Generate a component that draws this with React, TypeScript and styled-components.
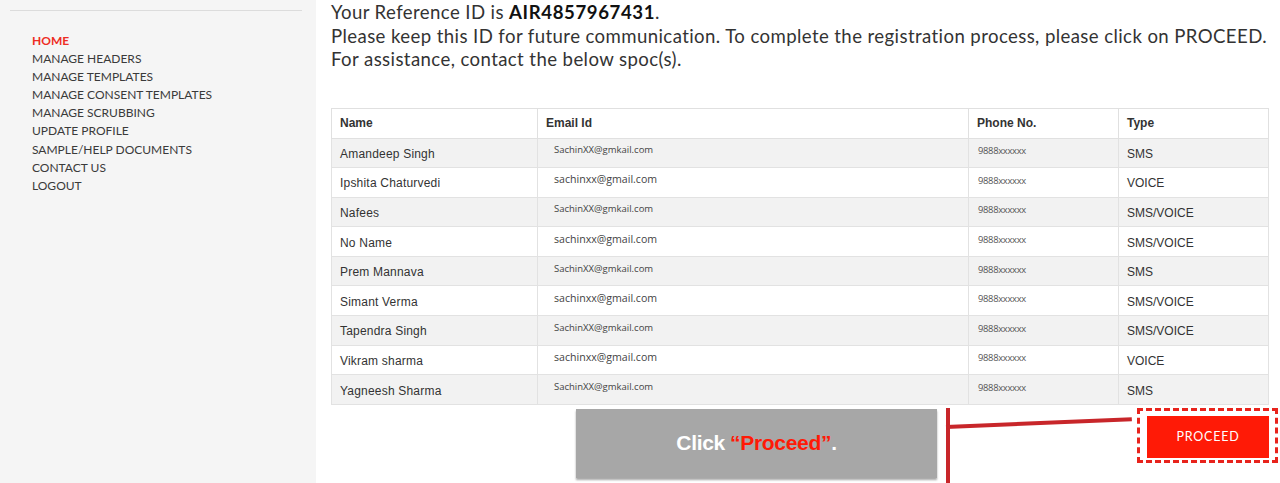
import React from 'react'
import styled, { createGlobalStyle } from 'styled-components';

const GlobalStyle = createGlobalStyle`
    html, body {
        margin: 0;
        padding: 0;
        background: #ffffff;
    }
    body {
        font-family: "Liberation Sans", Arial, sans-serif;
        color: #333;
        overflow: hidden;
    }
`;

const menu = [
    'HOME',
    'MANAGE HEADERS',
    'MANAGE TEMPLATES',
    'MANAGE CONSENT TEMPLATES',
    'MANAGE SCRUBBING',
    'UPDATE PROFILE',
    'SAMPLE/HELP DOCUMENTS',
    'CONTACT US',
    'LOGOUT',
];

type Spoc = { name: string; email: string; alt: boolean; phone: string; type: string };

const spocs: Spoc[] = [
    { name: 'Amandeep Singh', email: 'SachinXX@gmkail.com', alt: true, phone: '9888xxxxxx', type: 'SMS' },
    { name: 'Ipshita Chaturvedi', email: 'sachinxx@gmail.com', alt: false, phone: '9888xxxxxx', type: 'VOICE' },
    { name: 'Nafees', email: 'SachinXX@gmkail.com', alt: true, phone: '9888xxxxxx', type: 'SMS/VOICE' },
    { name: 'No Name', email: 'sachinxx@gmail.com', alt: false, phone: '9888xxxxxx', type: 'SMS/VOICE' },
    { name: 'Prem Mannava', email: 'SachinXX@gmkail.com', alt: true, phone: '9888xxxxxx', type: 'SMS' },
    { name: 'Simant Verma', email: 'sachinxx@gmail.com', alt: false, phone: '9888xxxxxx', type: 'SMS/VOICE' },
    { name: 'Tapendra Singh', email: 'SachinXX@gmkail.com', alt: true, phone: '9888xxxxxx', type: 'SMS/VOICE' },
    { name: 'Vikram sharma', email: 'sachinxx@gmail.com', alt: false, phone: '9888xxxxxx', type: 'VOICE' },
    { name: 'Yagneesh Sharma', email: 'SachinXX@gmkail.com', alt: true, phone: '9888xxxxxx', type: 'SMS' },
];

const App = () => {
  return (
    <Page>
        <GlobalStyle />
        <Sidebar>
            <Divider />
            <Menu>
                {menu.map((m, i) => (
                    <MenuItem key={m} $active={i === 0}>{m}</MenuItem>
                ))}
            </Menu>
        </Sidebar>
        <Main>
            <Intro>
                Your Reference ID is <b>AIR4857967431</b>.<br />
                Please keep this ID for future communication. To complete the registration process, please click on PROCEED.<br />
                For assistance, contact the below spoc(s).
            </Intro>
            <Table>
                <colgroup>
                    <col style={{ width: 206 }} />
                    <col style={{ width: 431 }} />
                    <col style={{ width: 150 }} />
                    <col style={{ width: 150 }} />
                </colgroup>
                <thead>
                    <tr>
                        <Th>Name</Th>
                        <Th>Email Id</Th>
                        <Th>Phone No.</Th>
                        <Th>Type</Th>
                    </tr>
                </thead>
                <tbody>
                    {spocs.map((s, i) => (
                        <Row key={s.name} $odd={i % 2 === 0}>
                            <NameCell>{s.name}</NameCell>
                            <EmailCell $alt={s.alt}>{s.email}</EmailCell>
                            <PhoneCell>{s.phone}</PhoneCell>
                            <TypeCell>{s.type}</TypeCell>
                        </Row>
                    ))}
                </tbody>
            </Table>
            <Actions>
                <DashedFrame>
                    <ProceedButton>PROCEED</ProceedButton>
                </DashedFrame>
                <Callout>
                    Click <em>“Proceed”</em>.
                </Callout>
                <LineV />
                <LineH />
            </Actions>
        </Main>
    </Page>
  )
}

export default App;

const Page = styled.div`
    display: flex;
    width: 1280px;
    height: 483px;
    overflow: hidden;
`;
const Sidebar = styled.div`
    width: 316px;
    flex-shrink: 0;
    background-color: #f5f5f5;
    padding-top: 10px;
    box-sizing: border-box;
`;
const Divider = styled.div`
    margin: 0 14px 0 10px;
    border-top: 1px solid #dcdcdc;
`;
const Menu = styled.div`
    padding: 21px 0 0 32px;
    display: flex;
    flex-direction: column;
`;
const MenuItem = styled.div<{ $active?: boolean }>`
    font-family: "Lato", "Liberation Sans", sans-serif;
    font-size: 12px;
    letter-spacing: 0;
    line-height: 18.1px;
    color: ${p => (p.$active ? '#ee2d24' : '#3a3a3a')};
    font-weight: ${p => (p.$active ? 700 : 400)};
`;
const Main = styled.div`
    flex: 1;
    padding: 1px 12px 0 15px;
    display: flex;
    flex-direction: column;
`;
const Intro = styled.div`
    font-family: "Lato", "Liberation Sans", sans-serif;
    font-size: 18.6px;
    letter-spacing: 0.4px;
    line-height: 23.5px;
    color: #333;
    b {
        font-weight: 700;
        color: #111;
        letter-spacing: 0.6px;
    }
`;
const Table = styled.table`
    margin-top: 36px;
    width: 937px;
    table-layout: fixed;
    border-collapse: collapse;
    border: 1px solid #e0e0e0;
`;
const Th = styled.th`
    text-align: left;
    font-size: 12px;
    font-weight: 700;
    color: #333;
    height: 29px;
    padding: 0 8px;
    border: 1px solid #e0e0e0;
    background: #ffffff;
`;
const Row = styled.tr<{ $odd: boolean }>`
    background: ${p => (p.$odd ? '#f2f2f2' : '#ffffff')};
    height: 29.6px;
    td {
        border: 1px solid #e2e2e2;
        vertical-align: middle;
    }
`;
const NameCell = styled.td`
    font-size: 12px;
    color: #333;
    padding: 2px 8px 0;
    letter-spacing: 0.2px;
`;
const EmailCell = styled.td<{ $alt: boolean }>`
    font-family: "Open Sans", "Liberation Sans", sans-serif;
    font-size: ${p => (p.$alt ? '9.5px' : '10.6px')};
    color: #444;
    padding: 0 16px 6px;
`;
const PhoneCell = styled.td`
    font-family: "Open Sans", "Liberation Sans", sans-serif;
    font-size: 9.4px;
    color: #555;
    padding: 0 9px 4px;
    letter-spacing: -0.3px;
`;
const TypeCell = styled.td`
    font-size: 12px;
    color: #333;
    padding: 2px 8px 0;
`;
const Actions = styled.div`
    position: relative;
    flex: 1;
    display: flex;
    justify-content: flex-end;
    align-items: flex-start;
    padding-top: 3px;
    margin-right: -9px;
`;
const DashedFrame = styled.div`
    border: 3px dashed #e8231c;
    padding: 5px 6px 2px 7px;
`;
const ProceedButton = styled.button`
    width: 122px;
    height: 42px;
    border: none;
    background: #ff1a06;
    color: #fff;
    font-family: "Lato", "Liberation Sans", sans-serif;
    font-size: 12.5px;
    letter-spacing: 0.8px;
    cursor: pointer;
`;
const Callout = styled.div`
    position: absolute;
    left: 245px;
    top: 4px;
    width: 361px;
    height: 69px;
    background: #a7a7a7;
    box-shadow: 0 2px 2px rgba(0, 0, 0, 0.35);
    display: flex;
    align-items: center;
    justify-content: center;
    color: #fff;
    font-family: "Liberation Sans", Arial, sans-serif;
    font-weight: 700;
    font-size: 21px;
    letter-spacing: -0.3px;
    em {
        font-style: normal;
        color: #ff1a06;
        margin-left: 5px;
    }
`;
const LineV = styled.div`
    position: absolute;
    left: 615px;
    top: 3px;
    width: 4px;
    height: 80px;
    background: #c8262a;
`;
const LineH = styled.div`
    position: absolute;
    left: 615px;
    top: 20px;
    width: 186px;
    height: 4px;
    background: #c8262a;
    transform: rotate(-2.4deg);
    transform-origin: left center;
`;
